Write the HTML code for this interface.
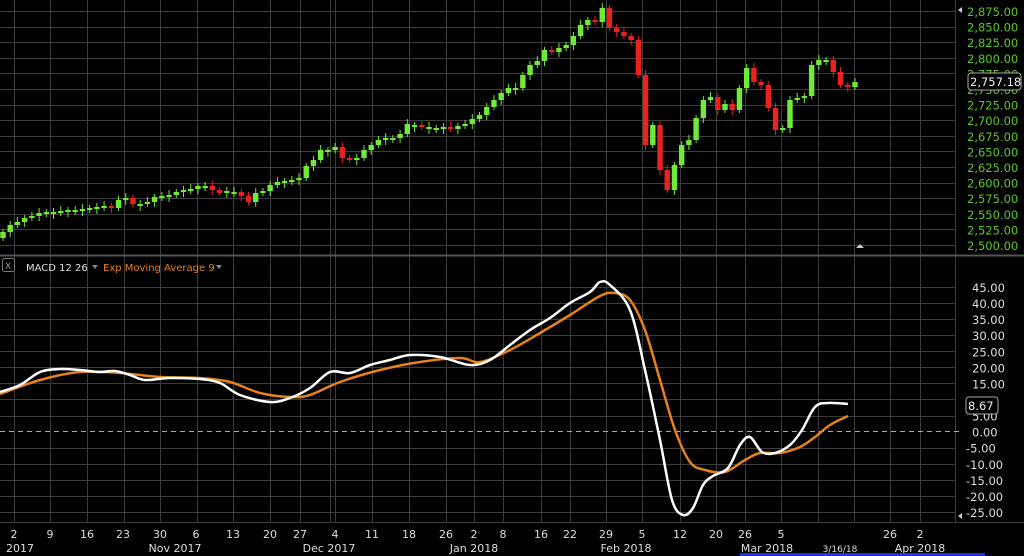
<!DOCTYPE html>
<html><head><meta charset="utf-8"><style>
html,body{margin:0;padding:0;background:#000;width:1024px;height:556px;overflow:hidden;font-family:"Liberation Sans",sans-serif}
svg{display:block}
</style></head><body>
<svg id="s" width="1024" height="556" xmlns="http://www.w3.org/2000/svg" font-family="DejaVu Sans, Liberation Sans, sans-serif">
<rect width="1024" height="556" fill="#000"/>
<g id="grid" stroke="#3c3c3c" stroke-width="1"></g>
<line x1="0" y1="255.5" x2="1024" y2="255.5" stroke="#555" stroke-width="2"/>
<line x1="0" y1="431.5" x2="960" y2="431.5" stroke="#aaa" stroke-width="1" stroke-dasharray="5,4"/>
<g id="candles"></g>
<path id="orange" fill="none" stroke="#e8811a" stroke-width="2.5"/>
<path id="white" fill="none" stroke="#fff" stroke-width="2.5"/>
<g id="ylab" fill="#5ac82a" font-size="11.5"></g>
<g id="mlab" fill="#ddd" font-size="11.5"></g>
<rect x="968" y="73" width="53" height="17" rx="3" fill="#000" stroke="#aaa"/>
<text x="970" y="86" fill="#eee" font-size="11.5">2,757.18</text>
<rect x="966" y="397" width="32" height="17" rx="3" fill="#000" stroke="#aaa"/>
<text x="968" y="410" fill="#eee" font-size="11.5">8.67</text>
<polygon points="958,10 962,7 962,13" fill="#ccc"/>
<polygon points="856,248 860,244 864,248" fill="#ccc"/>
<polygon points="958,516 962,513 962,519" fill="#ccc"/>
<rect x="2.5" y="258.5" width="12" height="13" rx="2" fill="none" stroke="#777"/>
<text x="5" y="269" fill="#999" font-size="9">X</text>
<text x="26" y="271" fill="#ddd" font-size="10">MACD 12 26</text>
<polygon points="92,265 98,265 95,269" fill="#888"/>
<text x="103" y="271" fill="#e8811a" font-size="10">Exp Moving Average 9</text>
<polygon points="216,265 222,265 219,269" fill="#888"/>
<g id="xlab" fill="#ddd" font-size="11" text-anchor="middle"></g>
<rect x="740" y="553" width="245" height="3" fill="#1a35e0"/>
</svg>
<script>
var NS="http://www.w3.org/2000/svg";
function el(p,t,a,txt){var e=document.createElementNS(NS,t);for(var k in a)e.setAttribute(k,a[k]);if(txt!==undefined)e.textContent=txt;document.getElementById(p).appendChild(e);}
var vx=[14,50,87,124,160,197,233,270,300,330,335,372,409,446,474,503,541,570,606,642,680,716,745,781,818,854,890,920,955];
vx.forEach(function(x){el("grid","line",{x1:x+.5,y1:0,x2:x+.5,y2:523});});
for(var i=0;i<16;i++){var y=245-i*15.6;el("grid","line",{x1:0,y1:Math.round(y)+.5,x2:955,y2:Math.round(y)+.5});
 var p=2500+i*25;el("ylab","text",{x:967,y:y+5},p.toLocaleString("en-US")+".00");}
for(var i=0;i<15;i++){var v=45-i*5;var y=287+i*16.07;if(v!=0)el("grid","line",{x1:0,y1:Math.round(y)+.5,x2:955,y2:Math.round(y)+.5});
 if(v==10)continue;el("mlab","text",{x:v<0?966:972,y:y+5},v.toFixed(2));}
el("grid","line",{x1:0,y1:522.5,x2:1024,y2:522.5});
var xl=[[14,"2"],[50,"9"],[87,"16"],[123,"23"],[160,"30"],[196,"6"],[233,"13"],[270,"20"],[300,"27"],[335,"4"],[372,"11"],[409,"18"],[446,"26"],[474,"2"],[503,"8"],[541,"16"],[570,"22"],[606,"29"],[642,"5"],[680,"12"],[716,"20"],[745,"26"],[781,"5"],[890,"26"],[920,"2"]];
xl.forEach(function(a){el("xlab","text",{x:a[0],y:538},a[1]);});
[[20,"2017"],[175,"Nov 2017"],[329,"Dec 2017"],[474,"Jan 2018"],[626,"Feb 2018"],[767,"Mar 2018"],[920,"Apr 2018"],[840,"3/16/18"]].forEach(function(a){el("xlab","text",{x:a[0],y:552,"font-size":a[1]=="3/16/18"?"9":"11"},a[1]);});
var c=[232,225,222,218,216,213,212,212,211,210,210,209,208,207,206,208,200,198,204,204,202,197,196,195,192,190,189,186,186,190,193,191,192,196,202,193,191,185,182,181,180,178,166,160,150,150,147,158,160,158,150,145,140,138,138,134,124,125,127,127,128,127,129,126,124,119,115,107,100,93,88,88,75,65,61,50,52,48,45,36,25,20,22,8,28,32,36,40,75,145,125,170,190,165,145,140,118,100,97,110,104,110,88,68,82,85,108,130,128,100,98,96,65,60,60,72,85,87,82];
var prev=238;
c.forEach(function(y,i){var x=3+i*7.22;var o=prev;if(Math.abs(o-y)<2)o=y+2;var up=y<o;
 var top=Math.min(o,y),bot=Math.max(o,y);var col=up?"#6fea3a":"#e8231c";
 el("candles","line",{x1:x,y1:top-3-(i%3),x2:x,y2:bot+3+(i%2)*2,stroke:col,"stroke-width":1});
 el("candles","rect",{x:x-2.7,y:top,width:5.4,height:Math.max(bot-top,2),fill:col});prev=y;});
var w=[[0,392],[20,385],[40,372],[60,369],[80,370],[100,372],[115,371],[130,375],[145,380],[170,378],[200,379],[220,383],[240,395],[270,402],[290,398],[310,388],[330,372],[350,373],[370,365],[390,360],[410,355],[440,357],[470,365],[490,360],[510,345],[530,330],[550,318],[570,303],[590,292],[600,282],[610,285],[630,310],[645,370],[660,440],[672,500],[683,515],[693,508],[703,485],[713,476],[728,468],[740,445],[750,437],[762,452],[775,453],[790,445],[802,430],[815,407],[828,403],[848,404]];
var o=[[0,394],[40,380],[80,372],[120,373],[160,377],[200,378],[230,382],[260,393],[290,397],[310,395],[340,382],[380,370],[420,362],[460,358],[480,362],[510,350],[540,333],[570,315],[600,296],[615,293],[630,300],[645,330],[660,380],[675,430],[690,462],[705,470],[725,472],[745,460],[760,453],[780,453],[800,447],[815,437],[830,425],[848,416]];
function smooth(pts){var d="M"+pts[0][0]+","+pts[0][1];for(var i=0;i<pts.length-1;i++){var p0=pts[i-1]||pts[i],p1=pts[i],p2=pts[i+1],p3=pts[i+2]||p2;
 var c1=[p1[0]+(p2[0]-p0[0])/6,p1[1]+(p2[1]-p0[1])/6],c2=[p2[0]-(p3[0]-p1[0])/6,p2[1]-(p3[1]-p1[1])/6];
 d+=" C"+c1.join(",")+" "+c2.join(",")+" "+p2.join(",");}return d;}
document.getElementById("white").setAttribute("d",smooth(w));
document.getElementById("orange").setAttribute("d",smooth(o));
</script>
</body></html>
